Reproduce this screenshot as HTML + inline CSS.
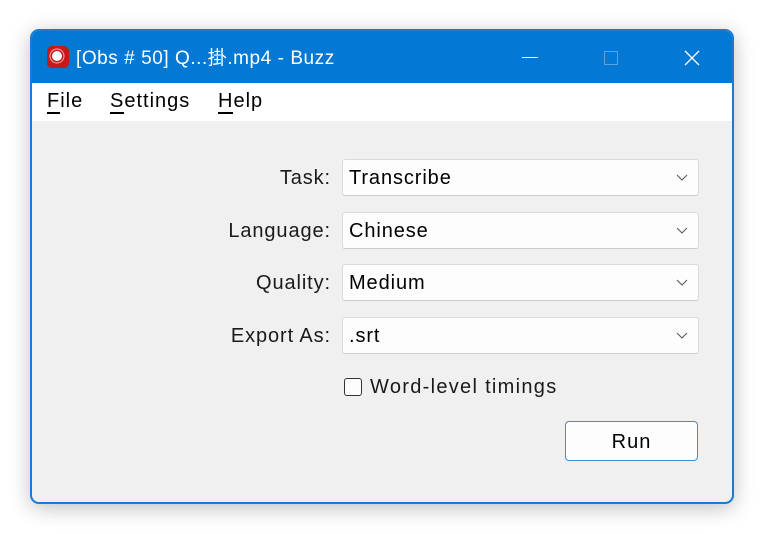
<!DOCTYPE html>
<html><head><meta charset="utf-8"><style>
*{box-sizing:border-box;margin:0;padding:0}
body{width:764px;height:534px;background:#fff;font-family:"Liberation Sans","Noto Sans CJK SC",sans-serif;position:relative;overflow:hidden}
.win{position:absolute;left:30px;top:29px;width:704px;height:475px;border:2px solid #1a7ad4;border-radius:9px;background:#f0f0f0;overflow:hidden;box-shadow:0 4px 20px rgba(0,0,0,.25)}
.title{position:absolute;left:0;top:0;width:100%;height:52px;background:#0378d4;color:#fff;font-size:19px}
.title .t{position:absolute;left:44px;top:12px;letter-spacing:0.55px}
.icon{position:absolute;left:15px;top:15px;width:22px;height:22px;border-radius:5px;background:#c81818}
.icon::after{content:"";position:absolute;left:5px;top:5px;width:10px;height:10px;border-radius:50%;background:#fff;box-shadow:0 0 0 1.5px #c81818,0 0 0 2.5px #f4b0b0}
.menu{position:absolute;left:0;top:52px;width:100%;height:38px;background:#fff;font-size:20px;color:#000;letter-spacing:1px}
.menu span{position:absolute;top:7px}
.menu u{text-decoration:none;border-bottom:2px solid #000}
.lbl{position:absolute;right:401px;font-size:20px;color:#1a1a1a;text-align:right;letter-spacing:0.9px}
.cb{position:absolute;left:310px;width:357px;height:37px;background:#fdfdfd;border:1px solid #dadada;border-bottom-color:#cccccc;border-radius:3px;font-size:20px;color:#000;padding:7px 0 0 6px;letter-spacing:0.9px}
.cb svg{position:absolute;right:10px;top:14px}
.chk{position:absolute;left:312px;top:347px;width:18px;height:18px;border:1px solid #333;border-radius:3px;background:#fdfdfd}
.btn{position:absolute;left:533px;top:390px;width:133px;height:40px;border:1px solid #3b8ed8;border-radius:4px;background:#fdfdfd;font-size:20px;text-align:center;line-height:40px;color:#000;letter-spacing:1px}
</style></head><body>
<div class="win">
 <div class="title"><div class="icon"></div><div class="t">[Obs # 50] Q...掛.mp4 - Buzz</div>
  <div style="position:absolute;left:490px;top:26px;width:16px;height:1px;background:#fff"></div>
  <div style="position:absolute;left:572px;top:20px;width:14px;height:14px;border:1px solid #5aa3e0"></div>
  <svg style="position:absolute;left:652px;top:19px" width="16" height="16"><path d="M1 1L15 15M15 1L1 15" stroke="#fff" stroke-width="1.3"/></svg>
 </div>
 <div class="menu"><span style="left:15px"><u>F</u>ile</span><span style="left:78px"><u>S</u>ettings</span><span style="left:186px"><u>H</u>elp</span></div>
 <div class="lbl" style="top:136px">Task:</div>
 <div class="cb" style="top:128px">Transcribe<svg width="12" height="8"><path d="M1 1L6 6L11 1" stroke="#555" fill="none"/></svg></div>
 <div class="lbl" style="top:189px">Language:</div>
 <div class="cb" style="top:181px">Chinese<svg width="12" height="8"><path d="M1 1L6 6L11 1" stroke="#555" fill="none"/></svg></div>
 <div class="lbl" style="top:241px">Quality:</div>
 <div class="cb" style="top:233px">Medium<svg width="12" height="8"><path d="M1 1L6 6L11 1" stroke="#555" fill="none"/></svg></div>
 <div class="lbl" style="top:294px">Export As:</div>
 <div class="cb" style="top:286px">.srt<svg width="12" height="8"><path d="M1 1L6 6L11 1" stroke="#555" fill="none"/></svg></div>
 <div class="chk"></div>
 <div style="position:absolute;left:338px;top:345px;font-size:20px;color:#1a1a1a;letter-spacing:1.3px">Word-level timings</div>
 <div class="btn">Run</div>
</div>
</body></html>
